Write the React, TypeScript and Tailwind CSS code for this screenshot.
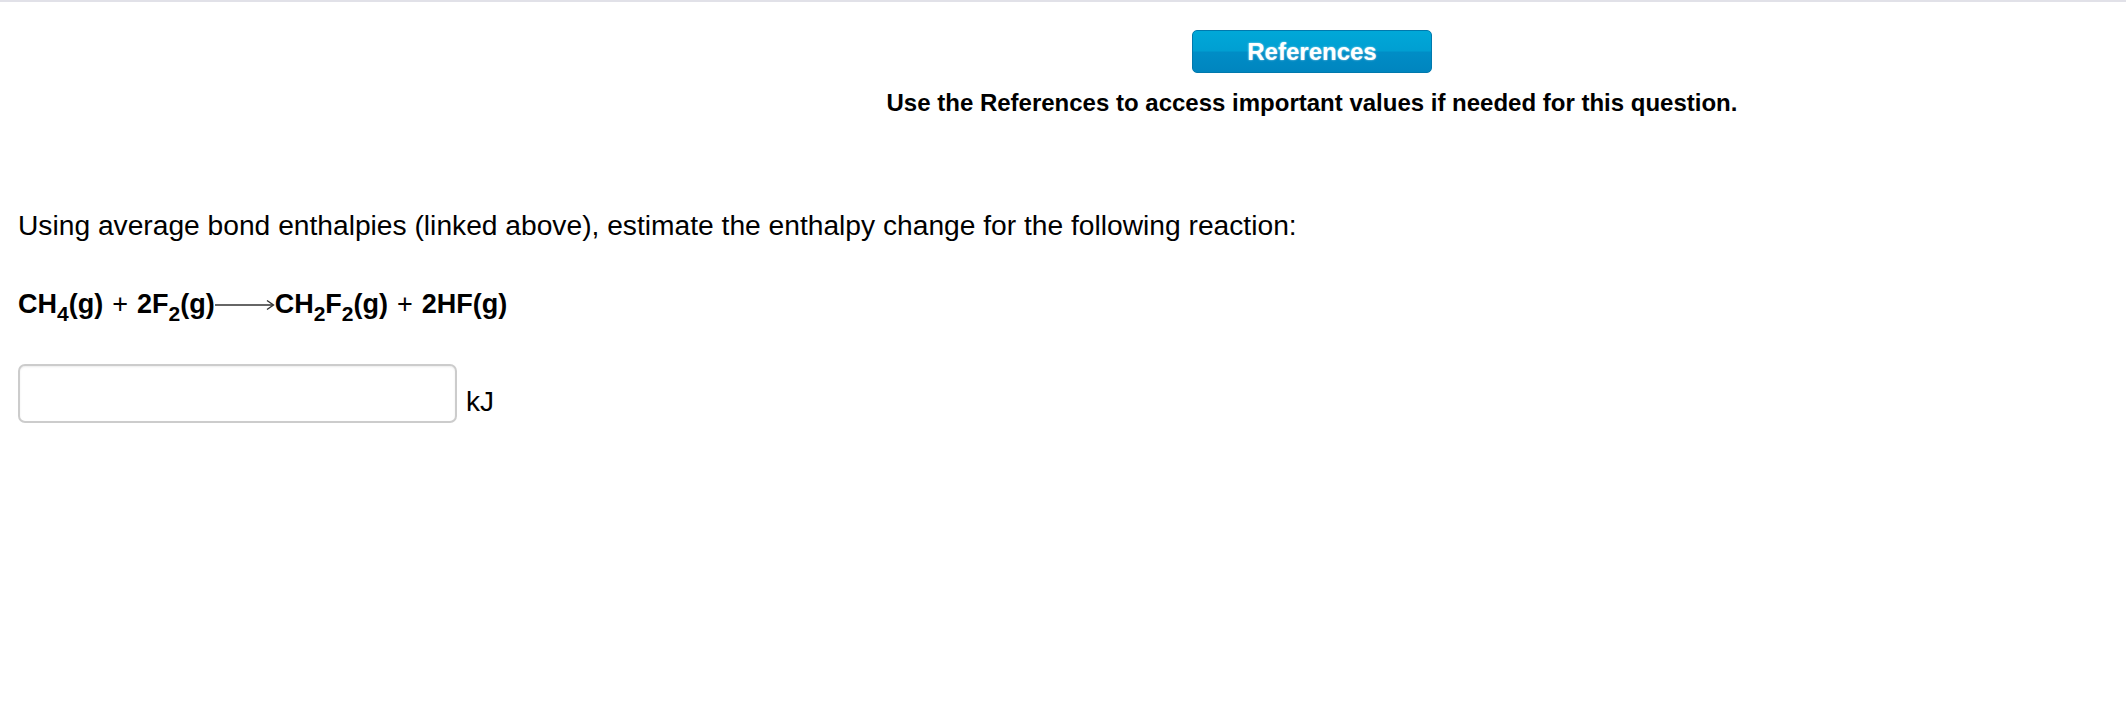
import React from "react";

function Arrow() {
  return <svg width="60" height="14" viewBox="0 0 60 14" className="inline-block align-baseline" aria-hidden>
    <line x1="0" y1="6" x2="58" y2="6" stroke="#333" strokeWidth="1.6" />
    <path d="M52 1.5 L58.5 6 L52 10.5" fill="none" stroke="#333" strokeWidth="1.4" />
  </svg>;
}

const Sub = ({ children }: { children: React.ReactNode }) => <span className="relative top-[8px] text-[21px] leading-none">{children}</span>;
const Plus = () => <span className="mx-[9px] font-normal">+</span>;

export default function App() {
  return <div className="min-h-[716px] w-full border-t-2 border-[#e1e1e8] bg-white text-black [font-family:'Liberation_Sans',Arial,sans-serif]">
    <div className="flex flex-col items-center pl-[498px]">
      <button className="mt-[28px] h-[43px] w-[240px] rounded-[5px] border border-[#0079ad] bg-[linear-gradient(#00a8d8,#009fd2_48%,#008dc6_52%,#0085bf)] text-[24px] font-bold text-white [text-shadow:0_0_2px_rgba(255,255,255,0.7)]">References</button>
      <p className="mt-[16px] text-[24px] leading-[28px] font-bold">Use the References to access important values if needed for this question.</p>
    </div>
    <div className="pl-[18px]">
      <p className="mt-[92px] text-[28.2px] leading-[32px]">Using average bond enthalpies (linked above), estimate the enthalpy change for the following reaction:</p>
      <p className="mt-[47px] text-[27px] leading-[32px] font-bold whitespace-nowrap">
        CH<Sub>4</Sub>(g)<Plus />2F<Sub>2</Sub>(g)<Arrow />CH<Sub>2</Sub>F<Sub>2</Sub>(g)<Plus />2HF(g)
      </p>
      <div className="mt-[44px] flex items-end">
        <input type="text" aria-label="Enthalpy change" className="h-[59px] w-[439px] rounded-[7px] border-2 border-[#cccccc] bg-white px-3 text-[24px] shadow-[inset_0_1px_2px_rgba(0,0,0,0.08)] outline-none" />
        <span className="mb-[5px] ml-[9px] text-[28px] leading-[32px]">kJ</span>
      </div>
    </div>
  </div>;
}
